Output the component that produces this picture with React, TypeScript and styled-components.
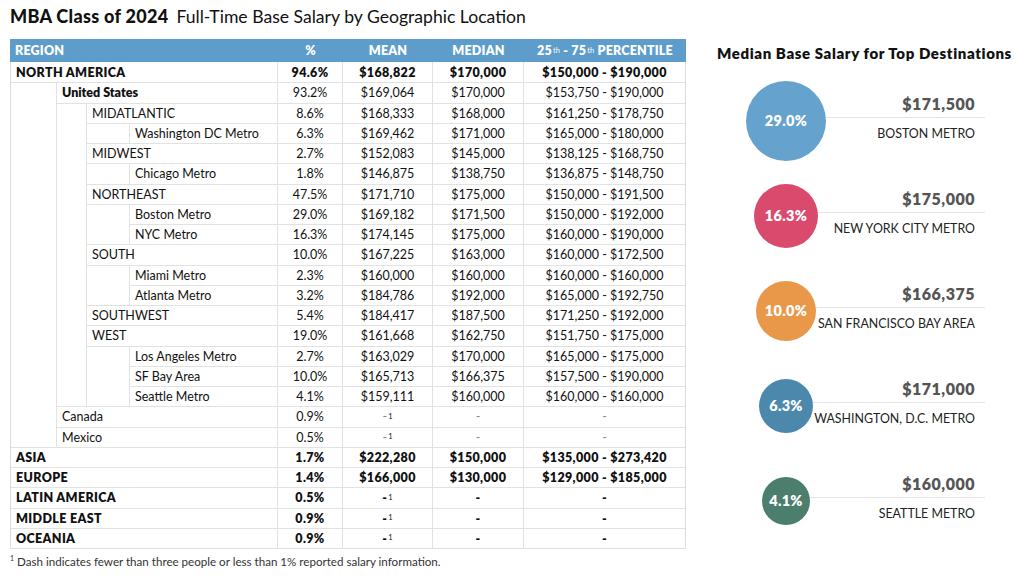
import styled, { createGlobalStyle } from "styled-components";

interface SalaryRow {
  label: string;
  pct: string;
  mean: string;
  median: string;
  range: string;
  bold?: boolean;
  boldLabel?: boolean;
  gutter?: number;
  children?: SalaryRow[];
}

interface Destination {
  pct: string;
  salary: string;
  place: string;
  color: string;
  size: number;
}

const DASH = "-";

const rows: SalaryRow[] = [
  {
    label: "NORTH AMERICA", pct: "94.6%", mean: "$168,822", median: "$170,000", range: "$150,000 - $190,000", bold: true, gutter: 46,
    children: [
      {
        label: "United States", pct: "93.2%", mean: "$169,064", median: "$170,000", range: "$153,750 - $190,000", boldLabel: true, gutter: 30,
        children: [
          { label: "MIDATLANTIC", pct: "8.6%", mean: "$168,333", median: "$168,000", range: "$161,250 - $178,750", gutter: 43,
            children: [{ label: "Washington DC Metro", pct: "6.3%", mean: "$169,462", median: "$171,000", range: "$165,000 - $180,000" }] },
          { label: "MIDWEST", pct: "2.7%", mean: "$152,083", median: "$145,000", range: "$138,125 - $168,750", gutter: 43,
            children: [{ label: "Chicago Metro", pct: "1.8%", mean: "$146,875", median: "$138,750", range: "$136,875 - $148,750" }] },
          { label: "NORTHEAST", pct: "47.5%", mean: "$171,710", median: "$175,000", range: "$150,000 - $191,500", gutter: 43,
            children: [
              { label: "Boston Metro", pct: "29.0%", mean: "$169,182", median: "$171,500", range: "$150,000 - $192,000" },
              { label: "NYC Metro", pct: "16.3%", mean: "$174,145", median: "$175,000", range: "$160,000 - $190,000" },
            ] },
          { label: "SOUTH", pct: "10.0%", mean: "$167,225", median: "$163,000", range: "$160,000 - $172,500", gutter: 43,
            children: [
              { label: "Miami Metro", pct: "2.3%", mean: "$160,000", median: "$160,000", range: "$160,000 - $160,000" },
              { label: "Atlanta Metro", pct: "3.2%", mean: "$184,786", median: "$192,000", range: "$165,000 - $192,750" },
            ] },
          { label: "SOUTHWEST", pct: "5.4%", mean: "$184,417", median: "$187,500", range: "$171,250 - $192,000" },
          { label: "WEST", pct: "19.0%", mean: "$161,668", median: "$162,750", range: "$151,750 - $175,000", gutter: 43,
            children: [
              { label: "Los Angeles Metro", pct: "2.7%", mean: "$163,029", median: "$170,000", range: "$165,000 - $175,000" },
              { label: "SF Bay Area", pct: "10.0%", mean: "$165,713", median: "$166,375", range: "$157,500 - $190,000" },
              { label: "Seattle Metro", pct: "4.1%", mean: "$159,111", median: "$160,000", range: "$160,000 - $160,000" },
            ] },
        ],
      },
      { label: "Canada", pct: "0.9%", mean: DASH, median: DASH, range: DASH },
      { label: "Mexico", pct: "0.5%", mean: DASH, median: DASH, range: DASH },
    ],
  },
  { label: "ASIA", pct: "1.7%", mean: "$222,280", median: "$150,000", range: "$135,000 - $273,420", bold: true },
  { label: "EUROPE", pct: "1.4%", mean: "$166,000", median: "$130,000", range: "$129,000 - $185,000", bold: true },
  { label: "LATIN AMERICA", pct: "0.5%", mean: DASH, median: DASH, range: DASH, bold: true },
  { label: "MIDDLE EAST", pct: "0.9%", mean: DASH, median: DASH, range: DASH, bold: true },
  { label: "OCEANIA", pct: "0.9%", mean: DASH, median: DASH, range: DASH, bold: true },
];

const destinations: Destination[] = [
  { pct: "29.0%", salary: "$171,500", place: "BOSTON METRO", color: "#65a2cd", size: 80 },
  { pct: "16.3%", salary: "$175,000", place: "NEW YORK CITY METRO", color: "#da4a6d", size: 64 },
  { pct: "10.0%", salary: "$166,375", place: "SAN FRANCISCO BAY AREA", color: "#e9984a", size: 60 },
  { pct: "6.3%", salary: "$171,000", place: "WASHINGTON, D.C. METRO", color: "#4b88ab", size: 54 },
  { pct: "4.1%", salary: "$160,000", place: "SEATTLE METRO", color: "#4c7e6d", size: 48 },
];

const GlobalStyle = createGlobalStyle`
  html, body {
    margin: 0;
    background: #ffffff;
  }
  body {
    font-family: Lato, "Noto Sans", sans-serif;
  }
`;

const Page = styled.div`
  width: 1024px;
  height: 581px;
  display: flex;
  overflow: hidden;
`;

const LeftSide = styled.div`
  width: 700px;
  padding: 5px 0 0 10px;
  box-sizing: border-box;
`;

const Title = styled.h1`
  margin: 0;
  height: 22px;
  font-size: 17.6px;
  line-height: 22px;
  font-weight: 400;
  color: #111;
  white-space: nowrap;
  b {
    font-size: 18px;
    font-weight: 900;
    letter-spacing: 0.3px;
    margin-right: 8px;
  }
`;

const Table = styled.div`
  margin-top: 12px;
  width: 674px;
  border: 1px solid #dddddd;
  border-top: none;
  font-size: 12.5px;
  color: #111;
`;

const HeaderRow = styled.div`
  display: flex;
  height: 23px;
  margin: 0 -1px;
  align-items: center;
  background: #5e9dcb;
  color: #ffffff;
  font-weight: 800;
  font-size: 12.5px;
  letter-spacing: 0.2px;
`;

const Row = styled.div<{ $bold?: boolean; $first?: boolean }>`
  display: flex;
  height: 20.25px;
  box-sizing: border-box;
  border-top: ${(p) => (p.$first ? "none" : "1px solid #e2e2e2")};
  font-weight: ${(p) => (p.$bold ? 800 : 400)};
  letter-spacing: ${(p) => (p.$bold ? "0.35px" : "0")};
`;

const Label = styled.div<{ $bold?: boolean }>`
  flex: 1;
  padding-left: 5px;
  display: flex;
  align-items: center;
  white-space: nowrap;
  font-weight: ${(p) => (p.$bold ? 800 : "inherit")};
`;

const Cell = styled.div<{ $w: number; $line?: boolean }>`
  width: ${(p) => p.$w}px;
  flex-shrink: 0;
  box-sizing: border-box;
  border-left: ${(p) => (p.$line ? "1px solid #e2e2e2" : "none")};
  display: flex;
  align-items: center;
  justify-content: center;
  white-space: nowrap;
`;

const Group = styled.div`
  display: flex;
`;

const Gutter = styled.div<{ $w: number }>`
  width: ${(p) => p.$w}px;
  flex-shrink: 0;
  box-sizing: border-box;
  border-top: 1px solid #e2e2e2;
  border-right: 1px solid #e2e2e2;
`;

const GroupBody = styled.div`
  flex: 1;
  display: flex;
  flex-direction: column;
`;

const Dash = styled.span<{ $faint?: boolean }>`
  color: ${(p) => (p.$faint ? "#8a8a8a" : "inherit")};
`;

const Sup = styled.sup`
  font-size: 7.5px;
  font-weight: 400;
  margin-left: 1px;
  vertical-align: 6px;
  line-height: 0;
`;

const Footnote = styled.p`
  margin: 6px 0 0;
  font-size: 11.6px;
  color: #333;
  sup {
    font-size: 7px;
    margin-right: 3px;
    line-height: 0;
  }
`;

const RightSide = styled.div`
  width: 324px;
  padding: 44px 0 0 0;
  box-sizing: border-box;
  display: flex;
  flex-direction: column;
`;

const SideTitle = styled.h2`
  margin: 0 0 0 17px;
  height: 19px;
  font-size: 15px;
  line-height: 19px;
  font-weight: 800;
  letter-spacing: 0.6px;
  color: #111;
  white-space: nowrap;
`;

const DestList = styled.div`
  margin-top: 10px;
  display: flex;
  flex-direction: column;
`;

const DestItem = styled.div`
  height: 95px;
  display: grid;
  grid-template-columns: 80px 159px;
  align-items: center;
  padding-left: 46px;
`;

const Bubble = styled.div<{ $size: number; $color: string }>`
  justify-self: center;
  position: relative;
  z-index: 1;
  width: ${(p) => p.$size}px;
  height: ${(p) => p.$size}px;
  border-radius: 50%;
  background: ${(p) => p.$color};
  color: #fff;
  font-weight: 800;
  font-size: 14.5px;
  letter-spacing: 0.3px;
  display: flex;
  align-items: center;
  justify-content: center;
`;

const DestInfo = styled.div`
  display: flex;
  flex-direction: column;
  align-items: flex-end;
  padding-bottom: 6px;
`;

const DestSalary = styled.div`
  font-size: 16px;
  line-height: 18px;
  font-weight: 800;
  letter-spacing: 0.5px;
  color: #555;
  padding-right: 10px;
`;

const DestRule = styled.div`
  align-self: stretch;
  margin: 4px 0 0 -40px;
  height: 1px;
  background: #e4e4e4;
`;

const DestPlace = styled.div`
  margin-top: 9px;
  font-size: 12.4px;
  line-height: 14px;
  color: #222;
  padding-right: 10px;
  white-space: nowrap;
`;

function Value({ text, bold, note }: { text: string; bold?: boolean; note?: boolean }) {
  if (text !== DASH) return <>{text}</>;
  return (
    <>
      <Dash $faint={!bold}>-</Dash>
      {note && <Sup>1</Sup>}
    </>
  );
}

function DataRow({ row, first }: { row: SalaryRow; first?: boolean }) {
  return (
    <Row $bold={row.bold} $first={first}>
      <Label $bold={row.boldLabel}>{row.label}</Label>
      <Cell $w={65} $line>{row.pct}</Cell>
      <Cell $w={90} $line><Value text={row.mean} bold={row.bold} note /></Cell>
      <Cell $w={91} $line><Value text={row.median} bold={row.bold} /></Cell>
      <Cell $w={162} $line><Value text={row.range} bold={row.bold} /></Cell>
    </Row>
  );
}

function RowTree({ row, first }: { row: SalaryRow; first?: boolean }) {
  return (
    <>
      <DataRow row={row} first={first} />
      {row.children && (
        <Group>
          <Gutter $w={row.gutter ?? 40} />
          <GroupBody>
            {row.children.map((child) => (
              <RowTree key={child.label} row={child} />
            ))}
          </GroupBody>
        </Group>
      )}
    </>
  );
}

export default function App() {
  return (
    <Page>
      <GlobalStyle />
      <LeftSide>
        <Title>
          <b>MBA Class of 2024</b>Full-Time Base Salary by Geographic Location
        </Title>
        <Table>
          <HeaderRow>
            <Label>REGION</Label>
            <Cell $w={65}>%</Cell>
            <Cell $w={90}>MEAN</Cell>
            <Cell $w={91}>MEDIAN</Cell>
            <Cell $w={162}>
              25<Sup>th</Sup>&nbsp;-&nbsp;75<Sup>th</Sup>&nbsp;PERCENTILE
            </Cell>
          </HeaderRow>
          {rows.map((row, i) => (
            <RowTree key={row.label} row={row} first={i === 0} />
          ))}
        </Table>
        <Footnote>
          <sup>1</sup>Dash indicates fewer than three people or less than 1% reported salary information.
        </Footnote>
      </LeftSide>
      <RightSide>
        <SideTitle>Median Base Salary for Top Destinations</SideTitle>
        <DestList>
          {destinations.map((d) => (
            <DestItem key={d.place}>
              <Bubble $size={d.size} $color={d.color}>{d.pct}</Bubble>
              <DestInfo>
                <DestSalary>{d.salary}</DestSalary>
                <DestRule />
                <DestPlace>{d.place}</DestPlace>
              </DestInfo>
            </DestItem>
          ))}
        </DestList>
      </RightSide>
    </Page>
  );
}
